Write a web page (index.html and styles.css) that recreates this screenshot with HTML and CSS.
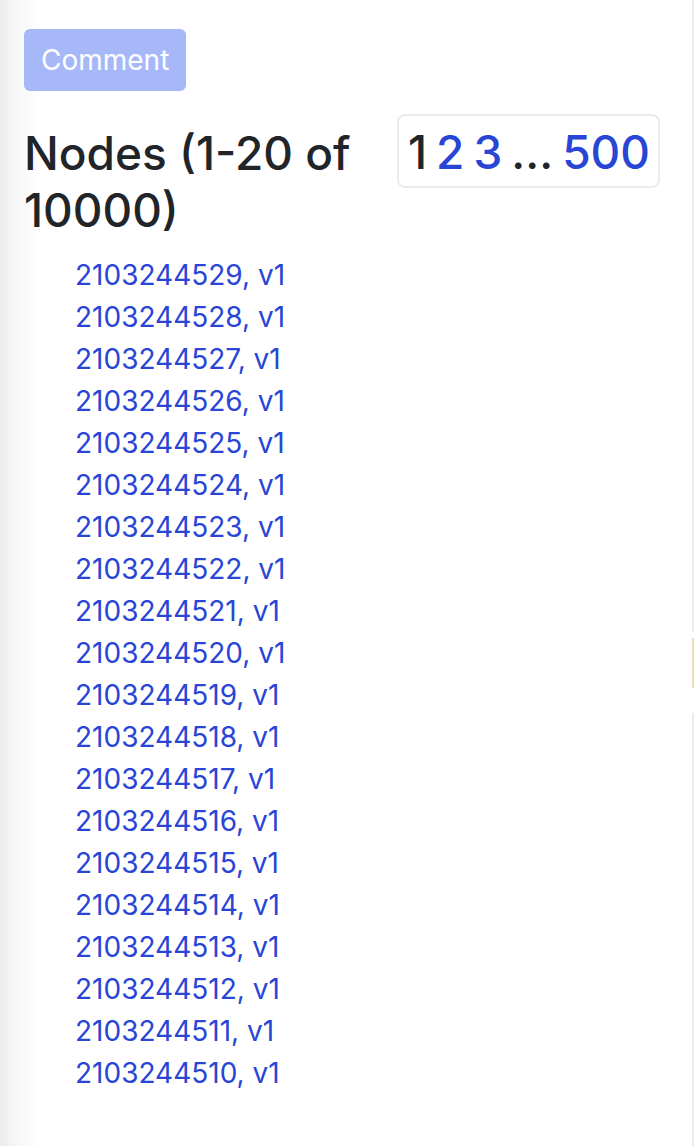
FILE: index.html
```html
<!DOCTYPE html>
<html lang="en">
<head>
<meta charset="utf-8">
<title>Nodes</title>
<link rel="stylesheet" href="styles.css">
</head>
<body>
<div class="edge-line" aria-hidden="true">
  <span class="edge-seg edge-top"></span>
  <span class="edge-seg edge-mark"></span>
  <span class="edge-seg edge-bottom"></span>
</div>
<main class="page">
  <button class="btn-comment" disabled>Comment</button>
  <div class="header-row">
    <h2 class="title">Nodes (1-20 of 10000)</h2>
    <nav class="pager">
      <span class="pg current">1</span>
      <a class="pg" href="#">2</a>
      <a class="pg" href="#">3</a>
      <span class="pg dots">...</span>
      <a class="pg" href="#">500</a>
    </nav>
  </div>
  <ul class="node-list">
    <li><a href="#">2103244529, v1</a></li>
    <li><a href="#">2103244528, v1</a></li>
    <li><a href="#">2103244527, v1</a></li>
    <li><a href="#">2103244526, v1</a></li>
    <li><a href="#">2103244525, v1</a></li>
    <li><a href="#">2103244524, v1</a></li>
    <li><a href="#">2103244523, v1</a></li>
    <li><a href="#">2103244522, v1</a></li>
    <li><a href="#">2103244521, v1</a></li>
    <li><a href="#">2103244520, v1</a></li>
    <li><a href="#">2103244519, v1</a></li>
    <li><a href="#">2103244518, v1</a></li>
    <li><a href="#">2103244517, v1</a></li>
    <li><a href="#">2103244516, v1</a></li>
    <li><a href="#">2103244515, v1</a></li>
    <li><a href="#">2103244514, v1</a></li>
    <li><a href="#">2103244513, v1</a></li>
    <li><a href="#">2103244512, v1</a></li>
    <li><a href="#">2103244511, v1</a></li>
    <li><a href="#">2103244510, v1</a></li>
  </ul>
</main>
</body>
</html>
```

FILE: styles.css
```css
html, body {
  margin: 0;
  padding: 0;
  height: 100%;
}
body {
  font-family: Inter, "Noto Sans", "Liberation Sans", sans-serif;
  color: #212529;
  background: linear-gradient(to right, #ebebeb 0, #f6f6f6 14px, #ffffff 42px);
  overflow: hidden;
}
.page {
  padding: 29px 34px 0 24px;
}
.btn-comment {
  display: block;
  height: 62px;
  padding: 0 17px;
  border: 0;
  border-radius: 6px;
  background: #a7b8f8;
  color: #ffffff;
  font-family: inherit;
  font-size: 28px;
  line-height: 62px;
}
.header-row {
  display: flex;
  align-items: flex-start;
  justify-content: space-between;
  gap: 24px;
  margin-top: 23px;
}
.title {
  flex: 1;
  margin: 11px 0 0 0;
  font-size: 46px;
  font-weight: 500;
  line-height: 57px;
}
.pager {
  display: flex;
  align-items: baseline;
  gap: 9px;
  padding: 9px 8px 6px 9px;
  border: 2px solid #ebebeb;
  border-radius: 8px;
  font-size: 46px;
  font-weight: 500;
  line-height: 55px;
}
.pg {
  text-decoration: none;
  color: #2845d6;
}
.pg.current, .pg.dots {
  color: #212529;
}
.node-list {
  list-style: none;
  margin: 15px 0 0 0;
  padding: 0 0 0 51px;
  font-size: 28px;
  line-height: 42px;
}
.node-list a {
  color: #2845d6;
  text-decoration: none;
}
.edge-line {
  position: fixed;
  top: 0;
  right: 0;
  width: 2px;
  height: 100%;
  display: flex;
  flex-direction: column;
}
.edge-seg {
  display: block;
  width: 2px;
}
.edge-top {
  height: 632px;
  background: #ececec;
  margin-bottom: 6px;
}
.edge-mark {
  height: 50px;
  background: #efdbb6;
  margin-bottom: 25px;
}
.edge-bottom {
  flex: 1;
  background: #ececec;
}
```
